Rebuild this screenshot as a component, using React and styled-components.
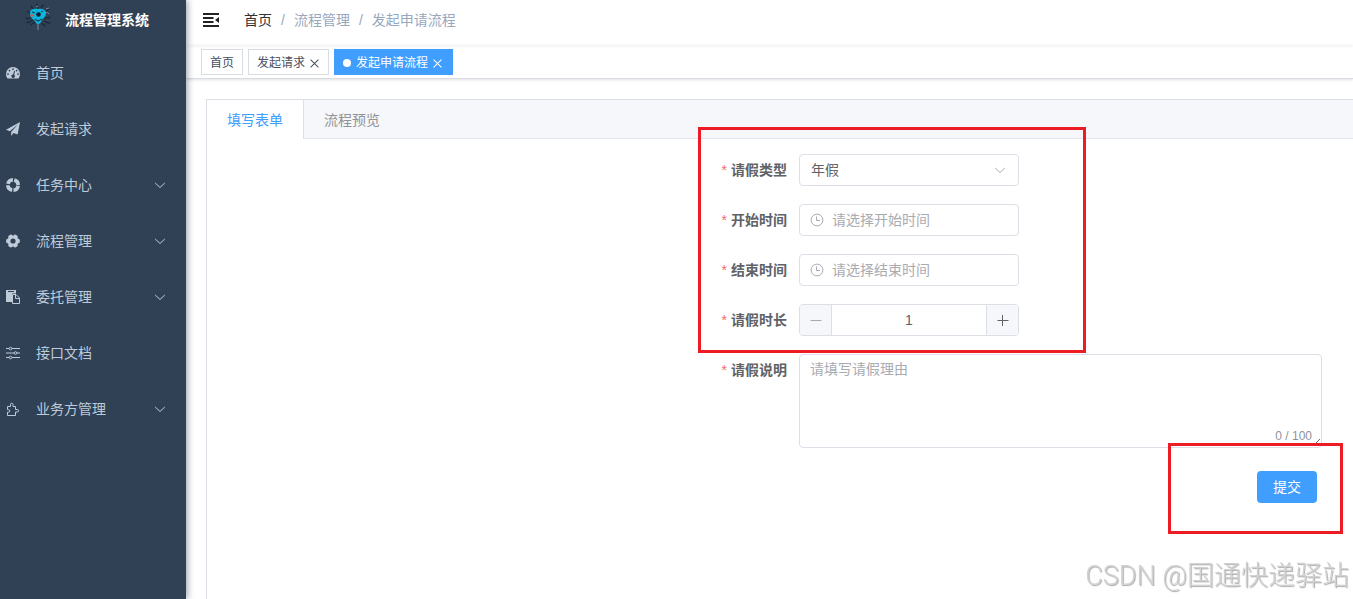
import React, { useState } from "react";
import styled, { createGlobalStyle, css } from "styled-components";

const GlobalStyle = createGlobalStyle`
  *, *::before, *::after { box-sizing: border-box; }
  body {
    margin: 0;
    overflow: hidden;
    background: #fff;
    color: #606266;
    font: 14px/20px "Liberation Sans", "Noto Sans CJK SC", sans-serif;
  }
  button, input, select, textarea { font: inherit; }
  a { color: inherit; text-decoration: none; }
`;

const Layout = styled.div`
  display: flex;
  min-height: 100vh;
`;

const Sidebar = styled.aside`
  flex: 0 0 186px;
  z-index: 2;
  background: #304156;
  box-shadow: 2px 0 6px rgba(0, 21, 41, 0.35);
`;

const Brand = styled.a`
  display: flex;
  align-items: center;
  gap: 12px;
  height: 40px;
  padding-left: 24px;
  color: #fff;
  font-weight: 700;

  svg { margin-top: -6px; }
`;

const Menu = styled.nav`
  padding-top: 5px;
`;

const MenuItem = styled.a`
  display: flex;
  align-items: center;
  gap: 16px;
  height: 56px;
  padding: 0 19px 0 6px;
  color: #bfcbd9;
`;

const MenuLabel = styled.span`
  flex: 1;
`;

const Main = styled.main`
  flex: 1;
  min-width: 0;
  display: flex;
  flex-direction: column;
`;

const Navbar = styled.header`
  display: flex;
  align-items: center;
  gap: 24px;
  height: 45px;
  padding: 0 16px 6px;
  box-shadow: 0 1px 4px rgba(0, 21, 41, 0.08);
`;

const IconButton = styled.button`
  display: flex;
  padding: 0;
  border: 0;
  background: none;
  color: #222;
`;

const Breadcrumb = styled.nav`
  display: flex;
  gap: 9px;
`;

const Crumb = styled.a`
  color: ${(p) => (p.$root ? "#303133" : "#97a8be")};
`;

const Slash = styled.span`
  color: #97a8be;
`;

const TagsBar = styled.div`
  display: flex;
  align-items: center;
  gap: 5px;
  height: 34px;
  padding: 0 15px;
  border-bottom: 1px solid #d8dce5;
  box-shadow: 0 1px 3px rgba(0, 0, 0, 0.12);
`;

const Tag = styled.a`
  display: flex;
  align-items: center;
  height: 26px;
  padding: 2px 8px 0;
  border: 1px solid #d8dce5;
  color: #495060;
  background: #fff;
  font-size: 12px;
  ${(p) =>
    p.$active &&
    css`
      padding-right: 9px;
      color: #fff;
      background: #409eff;
      border-color: #409eff;
    `}

  svg { margin: 2px 0 0 4px; }
`;

const Dot = styled.span`
  width: 8px;
  height: 8px;
  margin-right: 5px;
  border-radius: 50%;
  background: #fff;
`;

const Content = styled.section`
  flex: 1;
  display: flex;
  padding: 20px 0 0 20px;
`;

const Card = styled.div`
  flex: 1;
  min-width: 0;
  border: solid #dcdfe6;
  border-width: 1px 0 0 1px;
`;

const TabList = styled.div`
  display: flex;
  height: 39px;
  background: #f5f7fa;
  border-bottom: 1px solid #e4e7ed;
`;

const Tab = styled.button`
  height: 39px;
  padding: 0 20px;
  border: 0;
  border-right: 1px solid ${(p) => (p.$active ? "#dcdfe6" : "transparent")};
  background: ${(p) => (p.$active ? "#fff" : "transparent")};
  color: ${(p) => (p.$active ? "#409eff" : "#909399")};
`;

const Form = styled.form`
  position: relative;
  display: flex;
  flex-direction: column;
  gap: 18px;
  max-width: 623px;
  margin: 15px 31px 0 auto;
`;

const FormRow = styled.div`
  display: flex;
  align-items: flex-start;
`;

const FieldLabel = styled.label`
  flex: 0 0 100px;
  padding-right: 12px;
  line-height: 32px;
  text-align: right;
  font-weight: 700;

  &::before {
    content: "*";
    margin-right: 4px;
    color: #f56c6c;
    font-weight: 400;
  }
`;

const Control = styled.div`
  position: relative;
  display: flex;
  width: 220px;
  height: 32px;
  border: 1px solid #dcdfe6;
  border-radius: 4px;
  overflow: hidden;
  background: #fff;
  align-items: center;
  color: #a8abb2;
`;

const Select = styled.select`
  flex: 1;
  height: 100%;
  padding: 0 11px;
  border: 0;
  outline: 0;
  appearance: none;
  background: transparent;
  color: #606266;
`;

const ControlIcon = styled.span`
  display: flex;
  padding: ${(p) => (p.$end ? "0 11px 0 0" : "0 0 0 10px")};
`;

const Input = styled.input`
  flex: 1;
  min-width: 0;
  height: 100%;
  padding: 0 8px;
  border: 0;
  outline: 0;
  background: transparent;
  color: #606266;
  text-align: ${(p) => (p.$center ? "center" : "left")};

  &::placeholder { color: #a8abb2; }
`;

const StepButton = styled.button`
  display: flex;
  align-items: center;
  justify-content: center;
  width: 32px;
  height: 100%;
  padding: 0;
  border: 0 solid #dcdfe6;
  border-width: ${(p) => (p.$right ? "0 0 0 1px" : "0 1px 0 0")};
  background: #f5f7fa;
  color: #606266;

  &:disabled { color: #a8abb2; }
`;

const TextareaWrap = styled.div`
  position: relative;
  display: flex;
  flex: 1;
`;

const Textarea = styled.textarea`
  width: 100%;
  height: 94px;
  padding: 4px 10px;
  border: 1px solid #dcdfe6;
  border-radius: 4px;
  outline: 0;
  resize: vertical;
  color: #606266;

  &::placeholder { color: #a8abb2; }
`;

const Counter = styled.span`
  position: absolute;
  right: 10px;
  bottom: 2px;
  color: #909399;
  font-size: 12px;
`;

const Actions = styled.div`
  position: relative;
  display: flex;
  justify-content: flex-end;
  padding: 5px 5px 0 0;
`;

const Submit = styled.button`
  width: 60px;
  height: 32px;
  padding: 0;
  border: 0;
  border-radius: 4px;
  background: #409eff;
  color: #fff;
`;

const Highlight = styled.div`
  position: absolute;
  z-index: 1;
  border: 3px solid #ed1c24;
  pointer-events: none;
`;

const FieldsHighlight = styled(Highlight)`
  top: -27px;
  left: -1px;
  width: 388px;
  height: 226px;
`;

const SubmitHighlight = styled(Highlight)`
  top: -23px;
  right: -21px;
  width: 175px;
  height: 91px;
`;

const Watermark = styled.div`
  position: fixed;
  right: 4px;
  bottom: 6px;
  color: #d2d2d2;
  font-family: Roboto, "Noto Sans CJK SC", sans-serif;
  font-size: 27px;
  font-weight: 300;
  line-height: 34px;
  text-shadow: 1px 1px 1px #aaa;
  pointer-events: none;
`;

const Icon = ({ size = 14, children, ...rest }) => (
  <svg width={size} height={size} viewBox="0 0 14 14" fill="none" stroke="currentColor" aria-hidden="true" {...rest}>
    {children}
  </svg>
);

const ChevronDown = () => (
  <Icon><path d="M2.200 5 7 9.500 11.800 5" /></Icon>
);

const CloseIcon = () => (
  <Icon size={11}><path d="M2 2l10 10M12 2 2 12" strokeWidth="1.3" /></Icon>
);

const ClockIcon = () => (
  <Icon><circle cx="7" cy="7" r="5.900" /><path d="M6.500 3.500V7.500h3.500" /></Icon>
);

const FoldIcon = () => (
  <svg width="18" height="16" viewBox="0 0 18 16" fill="currentColor" aria-hidden="true">
    <path d="M1 1h16v2H1zM1 5h10.500v2H1zM1 9h10.500v2H1zM1 13h16v2H1zM17 5v6l-4-3z" />
  </svg>
);

const DashboardIcon = () => (
  <Icon stroke="none" fill="currentColor">
    <path fillRule="evenodd" d="M7 1a7 7 0 0 0-7 7c0 1.600.5 3 1.300 4.200q.3.400.8.400h9.800q.5 0 .8-.4A7.200 7.200 0 0 0 14 8a7 7 0 0 0-7-7zM7 2.200a.9.900 0 1 1 0 1.800.9.900 0 0 1 0-1.800zM3.500 3.700a.9.900 0 1 1 0 1.800.9.900 0 0 1 0-1.800zM2 7.200A.9.900 0 1 1 2 9a.9.900 0 0 1 0-1.800zM12 7.200A.9.900 0 1 1 12 9a.9.900 0 0 1 0-1.800zM8.200 4.800l.9.300-1 3.700a1.700 1.700 0 1 1-1-.3zM10.700 3.700a.9.900 0 1 1 0 1.800.9.900 0 0 1 0-1.800z" />
  </Icon>
);

const PlaneIcon = () => (
  <Icon stroke="none" fill="currentColor">
    <path d="M14 0 0 7.800l3.800 1.500L11.800 2.500 5.200 10v4l2.200-3 4.200 1.500z" />
  </Icon>
);

const HelpIcon = () => (
  <Icon><circle cx="7" cy="7" r="5.200" strokeWidth="3.600" strokeDasharray="6.768 1.400" strokeDashoffset="-0.700" /></Icon>
);

const GearIcon = () => (
  <Icon>
    <circle cx="7" cy="7" r="4.100" strokeWidth="3" />
    <g fill="currentColor" stroke="none">
      {[0, 60, 120, 180, 240, 300].map((angle) => (
        <rect key={angle} x="10.500" y="4.800" width="3.300" height="4.400" rx="1.500" transform={`rotate(${angle} 7 7)`} />
      ))}
    </g>
  </Icon>
);

const DocumentIcon = () => (
  <Icon>
    <path d="M0 0h10v3.500H6V12H0z" fill="currentColor" stroke="none" />
    <path d="M2 1.500h6" stroke="#304156" />
    <path d="M6.500 4.500H10L13.500 8v5.500h-7zM9.500 4.500V8.500h4" />
  </Icon>
);

const SettingsIcon = () => (
  <Icon>
    <path d="M0 2.500h3M6 2.500h8M0 7h8M11 7h3M0 11.500h3M6 11.500h8" />
    <circle cx="4.500" cy="2.500" r="1.300" /><circle cx="9.500" cy="7" r="1.300" /><circle cx="4.500" cy="11.500" r="1.300" />
  </Icon>
);

const PuzzleIcon = () => (
  <Icon>
    <path d="M1.500 4.500H4.500V2.500a1.200 1.200 0 0 1 2.500 0v2h2.500v3h1.800a1.200 1.200 0 0 1 0 2.500H9.500v3.500h-8v-3.300h1a1.200 1.200 0 0 0 0-2.500h-1z" />
  </Icon>
);

const Logo = () => (
  <svg width="29" height="28" viewBox="0 0 29 28" fill="none" aria-hidden="true">
    <g stroke="#1b2431" strokeWidth="1.100" strokeLinecap="round">
      <path d="M11 7C10 5 8 6 7 3M14 6c0-3-2-3-1-5M17 7c0-3 1-5 3-5M21 9c1-3 4-1 4-3M7 11C5 9 4 10 3 8M8 15c-3-1-4 2-6 0M9 17c-2 0-3 4-6 2M11 19c-1 2-3 1-4 3M20 18c2 0 3 3 6 2M21 15c3-1 3 1 5-1M18 20c0 2 2 1 3 3" />
    </g>
    <path d="M14 20v7" stroke="#596476" strokeWidth="2" />
    <path d="M21 9c2 1 3 0 4 2M12 4l2-1M22 6l3-1" stroke="#7b8795" />
    <path d="M6 10c0-4 4-5 8-4 4-1 8 1 8 4 0 4-3 5-4 7-1 2-2 4-4 4s-2-2-4-4c-2-1-4-3-4-7z" fill="#0bb6df" />
    <circle cx="14.500" cy="11.500" r="2.300" fill="#121b28" />
    <path d="M8 9l3 1M17 9l2-1M11 16l3 2 4-2" stroke="#174258" strokeWidth="1.100" />
    <path d="M6.500 12.500h3.500" stroke="#e75336" strokeWidth="2" />
  </svg>
);

const MENU = [
  { label: "首页", icon: DashboardIcon },
  { label: "发起请求", icon: PlaneIcon },
  { label: "任务中心", icon: HelpIcon, nested: true },
  { label: "流程管理", icon: GearIcon, nested: true },
  { label: "委托管理", icon: DocumentIcon, nested: true },
  { label: "接口文档", icon: SettingsIcon },
  { label: "业务方管理", icon: PuzzleIcon, nested: true },
];

function DateField({ id, label, placeholder }) {
  return (
    <FormRow>
      <FieldLabel htmlFor={id}>{label}</FieldLabel>
      <Control>
        <ControlIcon><ClockIcon /></ControlIcon>
        <Input id={id} placeholder={placeholder} />
      </Control>
    </FormRow>
  );
}

export default function App() {
  const [days, setDays] = useState(1);
  const [reason, setReason] = useState("");
  const [tab, setTab] = useState(0);

  return (
    <>
      <GlobalStyle />
      <Layout>
        <Sidebar>
          <Brand href="#"><Logo />流程管理系统</Brand>
          <Menu>
            {MENU.map(({ label, icon: ItemIcon, nested }) => (
              <MenuItem href="#" key={label}>
                <ItemIcon />
                <MenuLabel>{label}</MenuLabel>
                {nested && <ChevronDown />}
              </MenuItem>
            ))}
          </Menu>
        </Sidebar>

        <Main>
          <Navbar>
            <IconButton type="button" aria-label="折叠菜单"><FoldIcon /></IconButton>
            <Breadcrumb>
              <Crumb href="#" $root>首页</Crumb>
              <Slash>/</Slash>
              <Crumb href="#">流程管理</Crumb>
              <Slash>/</Slash>
              <Crumb href="#">发起申请流程</Crumb>
            </Breadcrumb>
          </Navbar>

          <TagsBar>
            <Tag href="#">首页</Tag>
            <Tag href="#">发起请求<CloseIcon /></Tag>
            <Tag href="#" $active><Dot />发起申请流程<CloseIcon /></Tag>
          </TagsBar>

          <Content>
            <Card>
              <TabList role="tablist">
                {["填写表单", "流程预览"].map((name, i) => (
                  <Tab key={name} type="button" role="tab" aria-selected={tab === i} $active={tab === i} onClick={() => setTab(i)}>
                    {name}
                  </Tab>
                ))}
              </TabList>

              <Form onSubmit={(e) => e.preventDefault()}>
                <FormRow>
                  <FieldLabel htmlFor="type">请假类型</FieldLabel>
                  <Control>
                    <Select id="type"><option>年假</option></Select>
                    <ControlIcon $end><ChevronDown /></ControlIcon>
                  </Control>
                </FormRow>
                <DateField id="start" label="开始时间" placeholder="请选择开始时间" />
                <DateField id="end" label="结束时间" placeholder="请选择结束时间" />
                <FormRow>
                  <FieldLabel htmlFor="days">请假时长</FieldLabel>
                  <Control>
                    <StepButton type="button" aria-label="减少" disabled={days <= 1} onClick={() => setDays(days - 1)}>
                      <Icon><path d="M1.500 7.500h11" /></Icon>
                    </StepButton>
                    <Input id="days" $center value={days} onChange={(e) => setDays(Number(e.target.value) || 1)} />
                    <StepButton type="button" aria-label="增加" $right onClick={() => setDays(days + 1)}>
                      <Icon><path d="M1.500 7.500h11M6.500 2v11" /></Icon>
                    </StepButton>
                  </Control>
                </FormRow>
                <FormRow>
                  <FieldLabel htmlFor="reason">请假说明</FieldLabel>
                  <TextareaWrap>
                    <Textarea id="reason" maxLength={100} placeholder="请填写请假理由" value={reason} onChange={(e) => setReason(e.target.value)} />
                    <Counter>{reason.length} / 100</Counter>
                  </TextareaWrap>
                </FormRow>
                <Actions>
                  <Submit type="submit">提交</Submit>
                  <SubmitHighlight />
                </Actions>
                <FieldsHighlight />
              </Form>
            </Card>
          </Content>
        </Main>
      </Layout>
      <Watermark>CSDN @国通快递驿站</Watermark>
    </>
  );
}
